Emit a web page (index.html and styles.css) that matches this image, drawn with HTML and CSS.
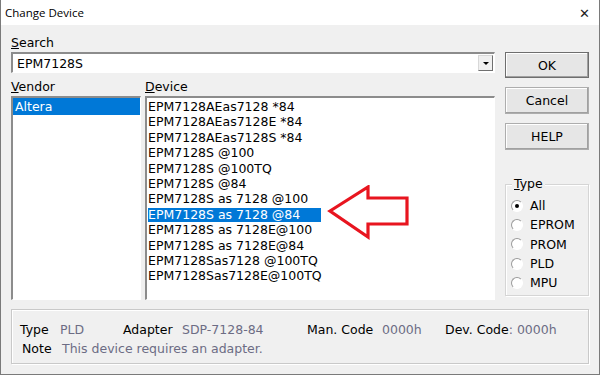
FILE: index.html
```html
<!DOCTYPE html>
<html lang="en">
<head>
    <meta charset="UTF-8">
    <title>Change Device</title>
    <link rel="stylesheet" href="styles.css">
</head>
<body>

<div class="window">
    <div class="titlebar">
        <span class="title">Change Device</span>
        <span class="close">&#x2715;</span>
    </div>

    <div class="content">
        <div class="top">
            <div class="left">
                <div class="label"><u>S</u>earch</div>
                <div class="combo">
                    <span class="combo-text">EPM7128S</span>
                    <span class="combo-btn"><span class="tri"></span></span>
                </div>

                <div class="lists">
                    <div class="col vendor-col">
                        <div class="label"><u>V</u>endor</div>
                        <div class="listbox">
                            <div class="item sel-full">Altera</div>
                        </div>
                    </div>
                    <div class="col device-col">
                        <div class="label"><u>D</u>evice</div>
                        <div class="listbox">
                            <div class="item">EPM7128AEas7128 *84</div>
                            <div class="item">EPM7128AEas7128E *84</div>
                            <div class="item">EPM7128AEas7128S *84</div>
                            <div class="item">EPM7128S @100</div>
                            <div class="item">EPM7128S @100TQ</div>
                            <div class="item">EPM7128S @84</div>
                            <div class="item">EPM7128S as 7128 @100</div>
                            <div class="item"><span class="sel">EPM7128S as 7128 @84</span></div>
                            <div class="item">EPM7128S as 7128E@100</div>
                            <div class="item">EPM7128S as 7128E@84</div>
                            <div class="item">EPM7128Sas7128 @100TQ</div>
                            <div class="item">EPM7128Sas7128E@100TQ</div>

                            <!-- arrow pointing at the selected device -->
                            <svg class="arrow" width="90" height="60" viewBox="0 0 90 60">
                                <polygon points="4,26 42,2 42,13 81,13 81,39 42,39 42,52"
                                         fill="none" stroke="#e8151f" stroke-width="3.2" stroke-linejoin="miter"/>
                            </svg>
                        </div>
                    </div>
                </div>
            </div>

            <div class="right">
                <button class="btn default">OK</button>
                <button class="btn">Cancel</button>
                <button class="btn">HELP</button>

                <div class="group">
                    <div class="legend"><u>T</u>ype</div>
                    <div class="radio"><span class="dot on"></span>All</div>
                    <div class="radio"><span class="dot"></span>EPROM</div>
                    <div class="radio"><span class="dot"></span>PROM</div>
                    <div class="radio"><span class="dot"></span>PLD</div>
                    <div class="radio"><span class="dot"></span>MPU</div>
                </div>
            </div>
        </div>

        <div class="info">
            <div class="info-row">
                <span class="key k-type">Type</span><span class="val v-type">PLD</span>
                <span class="key k-adapter">Adapter</span><span class="val v-adapter">SDP-7128-84</span>
                <span class="key k-man">Man. Code</span><span class="val v-man">0000h</span>
                <span class="key">Dev. Code</span><span class="val v-dev">:&nbsp;0000h</span>
            </div>
            <div class="info-row">
                <span class="key k-note">Note</span><span class="val">This device requires an adapter.</span>
            </div>
        </div>
    </div>
</div>

</body>
</html>
```

FILE: styles.css
```css
body {
    margin: 0;
    background-color: #f0f0f0;
    font-family: "DejaVu Sans", Verdana, sans-serif;
    font-size: 12px;
    color: #000;
}

.window {
    width: 600px;
    height: 375px;
    box-sizing: border-box;
    border: 1px solid #7a7a7a;
    border-top: none;
    background-color: #f0f0f0;
    display: flex;
    flex-direction: column;
}

.titlebar {
    height: 25px;
    background-color: #fff;
    display: flex;
    align-items: center;
    justify-content: space-between;
    padding: 0 9px 0 4px;
    font-family: "Open Sans", "Noto Sans", sans-serif;
    font-size: 11.5px;
}

.close {
    font-size: 13px;
    color: #222;
}

.content {
    padding: 10px 10px 0 10px;
    display: flex;
    flex-direction: column;
}

.top {
    display: flex;
    gap: 10px;
}

.left {
    width: 484px;
}

.label {
    height: 17px;
    line-height: 15px;
    font-size: 12.5px;
}

.combo {
    height: 21px;
    box-sizing: border-box;
    background-color: #fff;
    border-top: 2px solid #8c8c8c;
    border-left: 2px solid #8c8c8c;
    border-bottom: 1px solid #fff;
    border-right: 1px solid #fff;
    display: flex;
    align-items: center;
    justify-content: space-between;
    font-size: 12.5px;
    padding-left: 4px;
}

.combo-btn {
    width: 15px;
    height: 16px;
    margin-right: 1px;
    background-color: #f0f0f0;
    border: 1px solid #d8d8d8;
    border-right-color: #707070;
    border-bottom-color: #707070;
    box-sizing: border-box;
    display: flex;
    align-items: center;
    justify-content: center;
}

.tri {
    width: 0;
    height: 0;
    border-left: 3px solid transparent;
    border-right: 3px solid transparent;
    border-top: 3px solid #000;
}

.lists {
    display: flex;
    gap: 4px;
    margin-top: 6px;
}

.vendor-col {
    width: 130px;
}

.device-col {
    flex: 1;
}

.listbox {
    position: relative;
    height: 204px;
    box-sizing: border-box;
    background-color: #fff;
    border-top: 2px solid #8c8c8c;
    border-left: 2px solid #8c8c8c;
    border-bottom: 1px solid #fff;
    border-right: 1px solid #fff;
    padding-top: 1px;
    overflow: hidden;
    font-size: 12.5px;
}

.vendor-col .listbox {
    padding-top: 0;
}

.item {
    height: 15.4px;
    line-height: 15.4px;
    padding-left: 1px;
    white-space: nowrap;
}

.sel-full {
    background-color: #0078d7;
    color: #fff;
    padding-left: 2px;
    height: 17px;
    line-height: 17px;
}

.sel {
    display: inline-block;
    width: 173px;
    height: 14px;
    line-height: 14px;
    background-color: #0078d7;
    color: #fff;
}

.arrow {
    position: absolute;
    left: 179px;
    top: 87px;
}

.right {
    width: 84px;
    display: flex;
    flex-direction: column;
    padding-top: 17px;
}

.btn {
    height: 27px;
    margin-bottom: 9px;
    background-color: #e6e6e6;
    border: 1px solid #adadad;
    box-shadow: inset -1px -1px 0 #a0a0a0, inset 1px 1px 0 #fff;
    font-family: "DejaVu Sans", Verdana, sans-serif;
    font-size: 12.5px;
    color: #000;
    padding: 0;
}

.btn.default {
    border-color: #6e6e6e;
    height: 26px;
}

.group {
    margin-top: 25px;
    height: 112px;
    box-sizing: border-box;
    border: 1px solid #d5d5d5;
    box-shadow: 1px 1px 0 #fff, inset 1px 1px 0 #fff;
    position: relative;
    padding: 11px 0 0 5px;
}

.legend {
    position: absolute;
    top: -9px;
    left: 6px;
    background-color: #f0f0f0;
    padding: 0 2px;
    font-size: 12.5px;
}

.radio {
    display: flex;
    align-items: center;
    height: 19.3px;
    font-size: 12.5px;
}

.dot {
    width: 10px;
    height: 10px;
    border-radius: 50%;
    border: 1px solid #9a9a9a;
    border-bottom-color: #fff;
    border-right-color: #fff;
    background-color: #fff;
    margin-right: 7px;
    position: relative;
}

.dot.on::after {
    content: "";
    position: absolute;
    left: 3px;
    top: 3px;
    width: 4px;
    height: 4px;
    border-radius: 50%;
    background-color: #000;
}

.info {
    margin-top: 9px;
    height: 55px;
    box-sizing: border-box;
    border: 1px solid #c9c9c9;
    box-shadow: inset 1px 1px 0 #fff, 1px 1px 0 #fff;
    padding: 10px 0 0 8px;
    font-size: 12.5px;
}

.info-row {
    display: flex;
    height: 19px;
    line-height: 19px;
}

.val {
    color: #6c6c84;
    margin-left: 6px;
}

.k-type { width: 34px; }
.v-type { width: 63px; }
.k-adapter { width: 53px; }
.v-adapter { width: 125px; }
.k-man { width: 69px; }
.v-man { width: 63px; }
.v-dev { margin-left: 0; }
.k-note { width: 34px; padding-left: 2px; }
```
